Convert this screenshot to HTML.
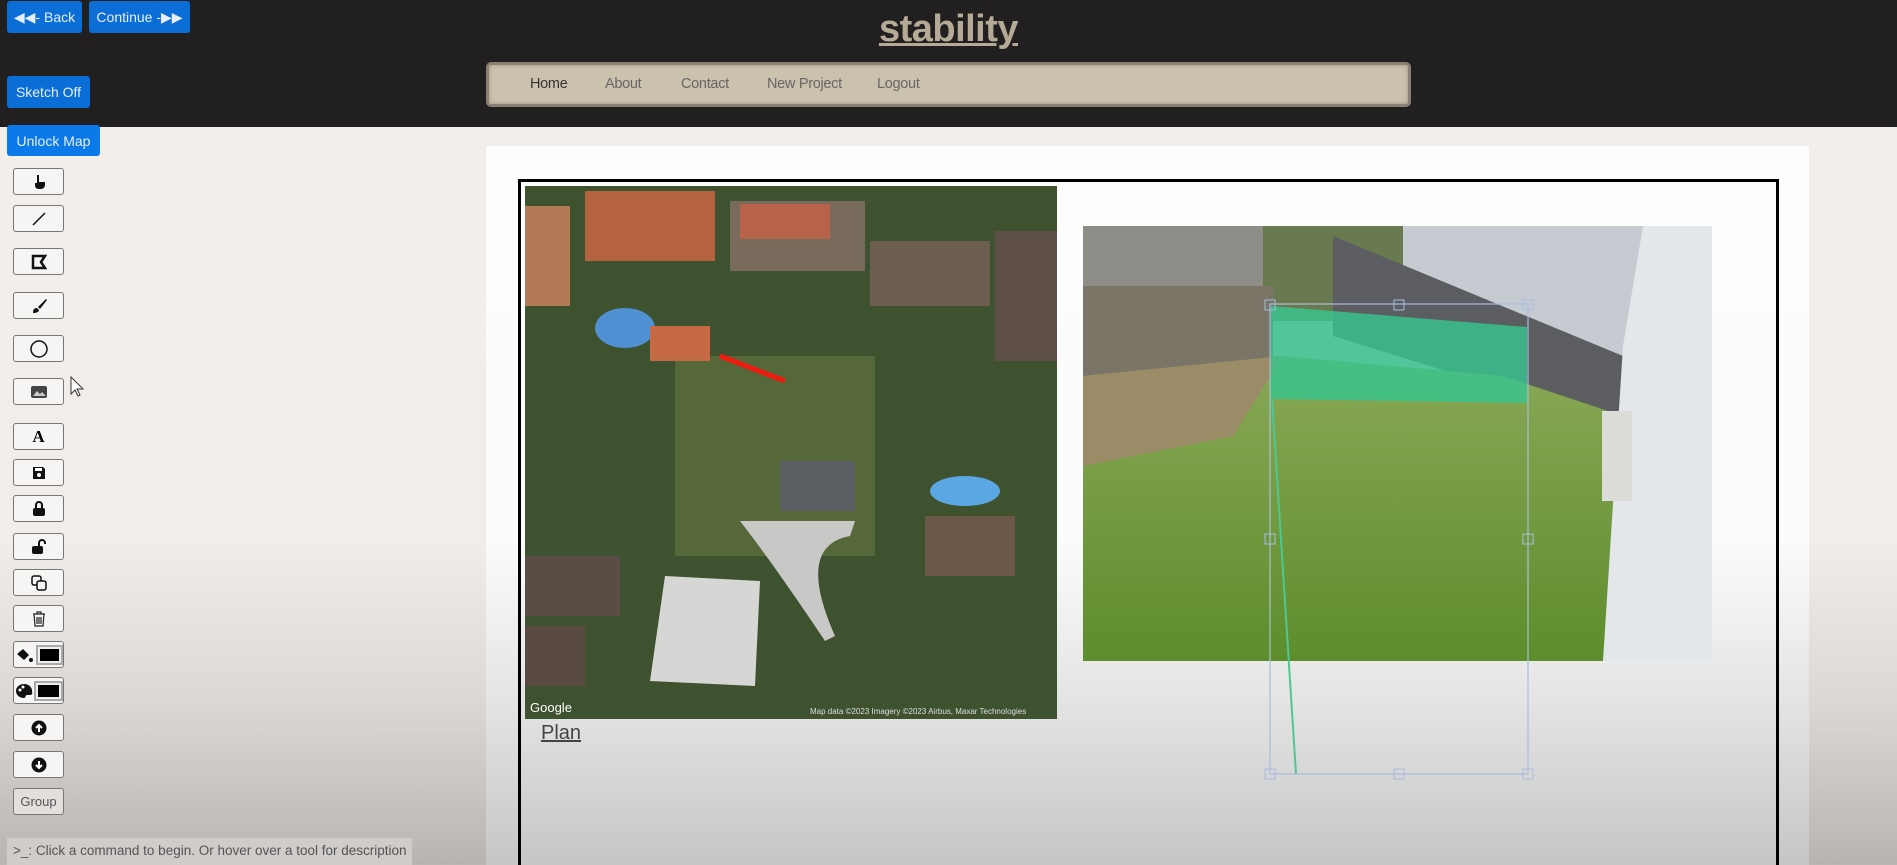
<!DOCTYPE html>
<html><head><meta charset="utf-8"><style>
*{box-sizing:border-box;margin:0;padding:0}
html{width:1897px;height:865px;overflow:hidden}
body{width:1897px;height:865px;overflow:hidden;position:relative;font-family:"Liberation Sans",sans-serif;
background:linear-gradient(to bottom,#f2eeea 0px,#f1ede9 540px,#ddd8d4 700px,#b9b4b0 865px)}
.hdr{position:absolute;left:0;top:0;width:1897px;height:127px;background:#221f20}
.btn{position:absolute;background:#0a6ed6;color:#e8eef8;border-radius:3px;font-size:14px;display:flex;align-items:center;justify-content:center}
.title{position:absolute;left:0;width:1897px;top:8px;text-align:center;font-size:38px;font-weight:bold;color:#b5aa96;text-decoration:underline;text-decoration-thickness:3px;letter-spacing:-0.5px}
.nav{position:absolute;left:486px;top:62px;width:925px;height:45px;background:#cbc2ad;border:3px solid #8a8173;border-radius:5px;box-shadow:inset 0 0 4px #9c927f}
.nav span{position:absolute;top:11px;font-size:14.5px;color:#666;letter-spacing:-0.3px}
.panel{position:absolute;left:486px;top:146px;width:1323px;height:719px;background:linear-gradient(to bottom,#fdfdfd 0,#fcfcfc 390px,#e3e3e3 560px,#c6c6c6 719px)}
.box{position:absolute;left:518px;top:179px;width:1261px;height:720px;border:3px solid #000}
.tool{position:absolute;left:13px;width:51px;height:27px;border:1px solid #777;border-radius:3px;background:#f7f5f3;display:flex;align-items:center;justify-content:center}
.status{position:absolute;left:7px;top:838px;width:405px;height:27px;background:#cfccca;font-size:13.5px;color:#555;padding:5px 0 0 6px}
</style></head><body>
<div class="hdr"></div>
<div class="btn" style="left:7px;top:1px;width:75px;height:32px">◀◀- Back</div>
<div class="btn" style="left:89px;top:1px;width:101px;height:32px">Continue -▶▶</div>
<div class="btn" style="left:7px;top:76px;width:83px;height:32px">Sketch Off</div>
<div class="btn" style="left:7px;top:125px;width:93px;height:31px;background:#0b79ea">Unlock Map</div>
<div class="title">stability</div>
<div class="nav">
<span style="left:41px;color:#333">Home</span><span style="left:116px">About</span><span style="left:192px">Contact</span><span style="left:278px">New Project</span><span style="left:388px">Logout</span>
</div>
<div class="panel"></div>
<div class="box"></div>
<svg style="position:absolute;left:525px;top:186px" width="532" height="533" viewBox="0 0 532 533">
<rect width="532" height="533" fill="#3f5230"/>
<rect x="150" y="170" width="200" height="200" fill="#56683a"/>
<rect x="60" y="5" width="130" height="70" fill="#b5623f"/>
<rect x="0" y="20" width="45" height="100" fill="#b37a5a"/>
<rect x="205" y="15" width="135" height="70" fill="#796b5c"/>
<rect x="215" y="18" width="90" height="35" fill="#b6634a"/>
<rect x="345" y="55" width="120" height="65" fill="#6e5e50"/>
<rect x="470" y="45" width="62" height="130" fill="#5e5048"/>
<ellipse cx="100" cy="142" rx="30" ry="20" fill="#4f91d3"/>
<rect x="125" y="140" width="60" height="35" fill="#c66a45"/>
<rect x="255" y="275" width="75" height="50" fill="#5a5d62"/>
<ellipse cx="440" cy="305" rx="35" ry="15" fill="#5aa7e4"/>
<rect x="400" y="330" width="90" height="60" fill="#6d5749"/>
<path d="M215 335 L330 335 L325 350 Q270 360 310 450 L300 455 Q250 380 215 335Z" fill="#c8c8c6"/>
<rect x="0" y="370" width="95" height="60" fill="#5a4d45"/>
<rect x="0" y="440" width="60" height="60" fill="#5a4b42"/>
<path d="M140 390 L235 395 L230 500 L125 495Z" fill="#d6d6d4"/>
<path d="M195 170 L260 195" stroke="#ee1c10" stroke-width="5"/>
<text x="5" y="526" fill="#fff" font-size="13" font-family="Liberation Sans">Google</text>
<text x="285" y="528" fill="#ddd" font-size="8" font-family="Liberation Sans">Map data ©2023 Imagery ©2023 Airbus, Maxar Technologies</text>
</svg>
<div style="position:absolute;left:541px;top:722px;font-size:20px;color:#444;text-decoration:underline">Plan</div>
<svg style="position:absolute;left:1083px;top:226px" width="629" height="435" viewBox="0 0 629 435">
<defs><linearGradient id="g" x1="0" y1="0" x2="0" y2="1"><stop offset="0" stop-color="#8aa856"/><stop offset="1" stop-color="#5d8d2c"/></linearGradient></defs>
<rect width="629" height="435" fill="#c6cbd2"/>
<rect x="0" y="0" width="190" height="65" fill="#8f8d87"/>
<rect x="180" y="0" width="140" height="95" fill="#6a7a50"/>
<rect x="0" y="60" width="190" height="110" fill="#7a7566"/>
<path d="M250 10 L540 130 L540 200 L250 110Z" fill="#5b5d60"/>
<path d="M0 150 L200 130 L420 150 L540 190 L520 435 L0 435Z" fill="url(#g)"/>
<path d="M0 150 L200 130 L150 210 L0 240Z" fill="#9b8c67"/>
<path d="M560 0 L629 0 L629 435 L520 435 L540 120Z" fill="#e4e7ea"/>
<rect x="519" y="185" width="30" height="90" fill="#dcdcd8"/>
</svg>
<svg style="position:absolute;left:0;top:0" width="1897" height="865">
<polygon points="1271,306 1527,327 1527,403 1271,399" fill="#38c48f" opacity="0.82"/>
<path d="M1272,399 L1296,774" stroke="#4ec793" stroke-width="2" fill="none"/>
<rect x="1270" y="304" width="258" height="470" fill="none" stroke="#a9bce0" stroke-width="1.2"/>
<g fill="none" stroke="#a9bce0" stroke-width="1">
<rect x="1265" y="300" width="10" height="10"/><rect x="1394" y="300" width="10" height="10"/><rect x="1523" y="300" width="10" height="10"/>
<rect x="1265" y="534" width="10" height="10"/><rect x="1523" y="534" width="10" height="10"/>
<rect x="1265" y="769" width="10" height="10"/><rect x="1394" y="769" width="10" height="10"/><rect x="1523" y="769" width="10" height="10"/>
</g>
</svg>
<div class="tool" style="top:168px"><svg width="16" height="16" viewBox="0 0 16 16"><path d="M6 1v8H4v3a4 4 0 004 3h2a4 4 0 004-4V8H8V1z" fill="#111"/></svg></div>
<div class="tool" style="top:205px"><svg width="16" height="16"><path d="M2 14L14 2" stroke="#111" stroke-width="1.5"/></svg></div>
<div class="tool" style="top:248px"><svg width="16" height="16"><path d="M2 2h12l-4 6 4 6H2z" fill="none" stroke="#111" stroke-width="2.5"/></svg></div>
<div class="tool" style="top:292px"><svg width="16" height="16"><path d="M15 1L7 9l2 2 7-9zM6 10c-3 0-4 2-4 5 3 0 6-1 6-3z" fill="#111"/></svg></div>
<div class="tool" style="top:335px"><svg width="20" height="20"><circle cx="10" cy="10" r="8" fill="none" stroke="#111" stroke-width="1.5"/></svg></div>
<div class="tool" style="top:378px"><svg width="18" height="14"><rect x="1" y="1" width="16" height="12" rx="2" fill="#444"/><path d="M3 11l4-5 3 3 2-2 4 4z" fill="#ccc"/></svg></div>
<div class="tool" style="top:423px;font-family:'Liberation Serif',serif;font-weight:bold;font-size:17px">A</div>
<div class="tool" style="top:459px"><svg width="14" height="14"><path d="M1 1h10l2 2v10H1z" fill="#111"/><rect x="3" y="2" width="7" height="3" fill="#fff"/><circle cx="7" cy="9" r="2" fill="#fff"/></svg></div>
<div class="tool" style="top:495px"><svg width="14" height="15"><path d="M4 7V4a3 3 0 016 0v3" fill="none" stroke="#111" stroke-width="2"/><rect x="1" y="7" width="12" height="8" rx="2" fill="#111"/></svg></div>
<div class="tool" style="top:533px"><svg width="16" height="15"><path d="M8 7V4a3 3 0 016 0v1" fill="none" stroke="#111" stroke-width="2"/><rect x="1" y="7" width="11" height="8" rx="2" fill="#111"/></svg></div>
<div class="tool" style="top:569px"><svg width="16" height="16"><rect x="1" y="1" width="9" height="9" rx="2" fill="none" stroke="#111" stroke-width="1.5"/><rect x="6" y="6" width="9" height="9" rx="2" fill="#f7f5f3" stroke="#111" stroke-width="1.5"/></svg></div>
<div class="tool" style="top:605px"><svg width="14" height="16"><path d="M1 3h12M5 3V1h4v2M2 3l1 12h8l1-12M5 6v7M7 6v7M9 6v7" fill="none" stroke="#222" stroke-width="1.2"/></svg></div>
<div class="tool" style="top:641px;justify-content:flex-start;padding-left:1px"><svg width="20" height="16"><path d="M2 7l6-5 6 6-5 5z" fill="#111"/><circle cx="16" cy="13" r="2" fill="#111"/></svg><div style="width:28px;height:20px;border:2px solid #aaa;background:#000;margin-left:1px;box-shadow:inset 0 0 0 2px #eee"></div></div>
<div class="tool" style="top:677px;justify-content:flex-start;padding-left:1px"><svg width="18" height="16"><path d="M9 1a8 7 0 100 14c2 0 1-3 3-3h3a2 2 0 002-3A8 7 0 009 1z" fill="#111"/><circle cx="5" cy="7" r="1.5" fill="#fff"/><circle cx="8" cy="4" r="1.5" fill="#fff"/></svg><div style="width:29px;height:20px;border:2px solid #aaa;background:#000;margin-left:1px;box-shadow:inset 0 0 0 2px #eee"></div></div>
<div class="tool" style="top:714px"><svg width="16" height="16"><circle cx="8" cy="8" r="7.5" fill="#111"/><path d="M8 12V5M5 8l3-3 3 3" stroke="#fff" stroke-width="2" fill="none"/></svg></div>
<div class="tool" style="top:751px"><svg width="16" height="16"><circle cx="8" cy="8" r="7.5" fill="#111"/><path d="M8 4v7M5 8l3 3 3-3" stroke="#fff" stroke-width="2" fill="none"/></svg></div>
<div class="tool" style="top:788px;font-size:13px;color:#555;background:#e2dfdc">Group</div>
<div class="status">&gt;_: Click a command to begin. Or hover over a tool for description</div>
<svg style="position:absolute;left:70px;top:376px" width="14" height="22"><path d="M1 1v17l4-4 3 6 2-1-3-6h6z" fill="#fff" stroke="#333"/></svg>
</body></html>
